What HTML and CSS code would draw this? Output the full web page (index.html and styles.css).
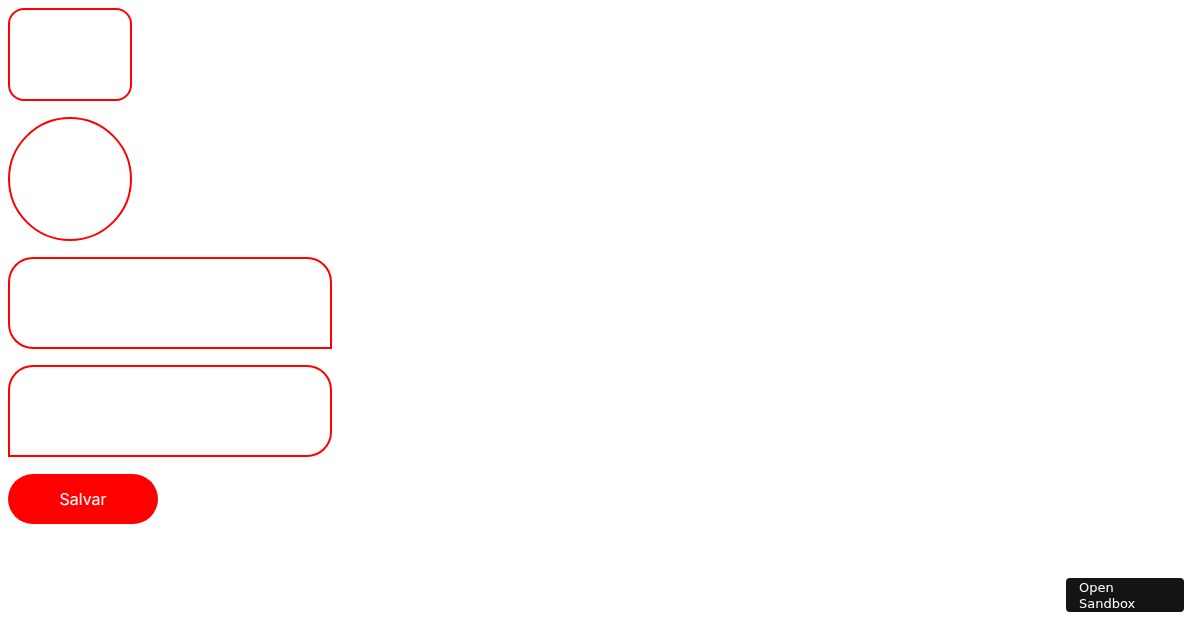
FILE: index.html
```html
<!DOCTYPE html>
<html>
<head>
<meta charset="utf-8">
<link rel="stylesheet" href="styles.css">
</head>
<body>
<div class="stack">
  <div class="shape box"></div>
  <div class="shape circle"></div>
  <div class="shape wide cut-br"></div>
  <div class="shape wide cut-bl"></div>
  <button class="save">Salvar</button>
</div>
<a class="sandbox">Open Sandbox</a>
</body>
</html>
```
FILE: styles.css
```css
html, body {
  margin: 0;
  background: #fff;
}
body {
  padding: 8px;
  font-family: Inter, "Liberation Sans", sans-serif;
}
.stack {
  display: flex;
  flex-direction: column;
  align-items: flex-start;
  gap: 16px;
}
.shape {
  border: 2px solid #ff0000;
  box-sizing: border-box;
}
.box {
  width: 124px;
  height: 93px;
  border-radius: 16px;
}
.circle {
  width: 124px;
  height: 124px;
  border-radius: 50%;
}
.wide {
  width: 324px;
  height: 92px;
}
.cut-br {
  border-radius: 25px 25px 0 25px;
}
.cut-bl {
  border-radius: 25px 25px 25px 0;
}
.save {
  width: 150px;
  height: 50px;
  border: none;
  border-radius: 25px;
  background: #ff0000;
  color: #fff;
  font-family: Inter, "Liberation Sans", sans-serif;
  font-size: 16px;
  padding: 0;
  margin-top: 1px;
}
.sandbox {
  position: fixed;
  right: 16px;
  bottom: 18px;
  width: 118px;
  height: 34px;
  box-sizing: border-box;
  padding: 2px 13px;
  background: #141414;
  color: #fff;
  border-radius: 4px;
  font-family: "DejaVu Sans", Verdana, sans-serif;
  font-size: 13px;
  line-height: 16px;
  word-spacing: 100px;
}
```
